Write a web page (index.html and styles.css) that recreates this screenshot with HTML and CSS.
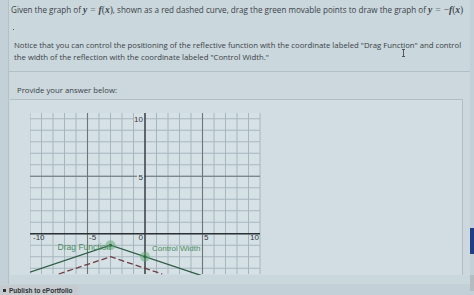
FILE: index.html
```html
<!DOCTYPE html>
<html>
<head>
<meta charset="utf-8">
<link rel="stylesheet" href="styles.css">
</head>
<body>
<div class="screen">
  <div class="main">
    <div class="card">
      <p class="q1">Given the graph of <span class="m">y</span><span class="eq">=</span><span class="m">f</span><span class="mp">(</span><span class="m">x</span><span class="mp">)</span>, shown as a red dashed curve, drag the green movable points to draw the graph of <span class="m">y</span><span class="eq">=</span><span class="mp">&minus;</span><span class="m">f</span><span class="mp">(</span><span class="m">x</span><span class="mp">)</span></p>
      <div class="dotrow"><span class="dot"></span></div>
      <p class="q2">Notice that you can control the positioning of the reflective function with the coordinate labeled "Drag Function" and control the width of the reflection with the coordinate labeled "Control Width."<span class="ibeam"></span></p>
      <div class="section">
        <p class="prompt">Provide your answer below:</p>
        <div class="answer">
          <svg class="graph" width="232" height="162" viewBox="0 0 232 162">
            <rect x="0" y="0" width="230" height="161" fill="#d6e1e6"/>
            <path class="thin" d="M0 0V161M11.5 0V161M23 0V161M34.5 0V161M46 0V161M57.5 0V161M69 0V161M80.5 0V161M92 0V161M103.5 0V161M115 0V161M126.5 0V161M138 0V161M149.5 0V161M161 0V161M172.5 0V161M184 0V161M195.5 0V161M207 0V161M218.5 0V161M230 0V161M0 5.75H230M0 17.25H230M0 28.75H230M0 40.25H230M0 51.75H230M0 63.25H230M0 74.75H230M0 86.25H230M0 97.75H230M0 109.25H230M0 120.75H230M0 132.25H230M0 143.75H230M0 155.25H230"/>
            <path class="thick" d="M57.5 0V161M172.5 0V161M0 63.25H230"/>
            <path class="axis" d="M115 0V161M0 120.75H230"/>
            <rect x="104" y="1" width="10" height="9" fill="#d6e1e6"/>
            <text class="lbl" x="113" y="9" text-anchor="end">10</text>
            <rect x="107" y="59" width="7" height="9" fill="#d6e1e6"/>
            <text class="lbl" x="113" y="66.5" text-anchor="end">5</text>
            <text class="lbl" x="3" y="127">-10</text>
            <text class="lbl" x="59" y="127">-5</text>
            <text class="lbl" x="113" y="127" text-anchor="end">0</text>
            <text class="lbl" x="174" y="127">5</text>
            <text class="lbl" x="229" y="127" text-anchor="end">10</text>
            <path class="dashed" d="M28.75 161L80.5 143.75L132.25 161"/>
            <path class="solid" d="M0 159.1L80.5 132.25L172.5 162.9"/>
            <circle cx="80.5" cy="132.25" r="5" class="halo"/>
            <circle cx="80.5" cy="132.25" r="1.6" class="core"/>
            <circle cx="115" cy="143.75" r="5" class="halo"/>
            <circle cx="115" cy="143.75" r="1.6" class="core"/>
            <text class="plabel" x="81" y="136.5" text-anchor="end">Drag Function</text>
            <text class="plabel small" x="122" y="137.5">Control Width</text>
          </svg>
        </div>
      </div>
    </div>
    <div class="footer"><span class="tab"><span class="sq"></span>Publish to ePortfolio</span></div>
  </div>
  <div class="side">
    <div class="blue"></div>
    <div class="grey"></div>
  </div>
</div>
</body>
</html>
```
FILE: styles.css
```css
html, body {
  margin: 0;
  padding: 0;
}
body {
  width: 474px;
  height: 295px;
  overflow: hidden;
  background: #c3d0d7;
  font-family: "Open Sans", "Liberation Sans", sans-serif;
  color: #3a4247;
}
.screen {
  display: flex;
  width: 474px;
  height: 295px;
}
.main {
  flex: 1;
  display: flex;
  flex-direction: column;
  min-width: 0;
}
.card {
  flex: 1;
  margin-left: 8px;
  background: #cad7dd;
  border-left: 1px solid #b3c1c8;
  position: relative;
}
.q1 {
  margin: 0;
  padding: 3.5px 0 0 2px;
  font-size: 8.1px;
  line-height: 12.4px;
  white-space: nowrap;
}
.m {
  font-family: "Liberation Serif", serif;
  font-style: italic;
  font-weight: bold;
  font-size: 9.5px;
}
.mp {
  font-family: "Liberation Serif", serif;
  font-size: 9.5px;
}
.eq {
  font-family: "Liberation Serif", serif;
  font-size: 9.5px;
  color: #6a7479;
  margin: 0 3px;
}
.dotrow {
  height: 23px;
  position: relative;
}
.dot {
  position: absolute;
  left: 4px;
  top: 13px;
  width: 1px;
  height: 1px;
  background: #555;
}
.q2 {
  margin: 0;
  padding: 0 8px 0 5px;
  font-size: 7.75px;
  line-height: 12.4px;
  height: 32px;
  position: relative;
}
.ibeam {
  position: absolute;
  left: 393px;
  top: 10px;
  width: 3px;
  height: 8px;
  border-top: 1px solid #555;
  border-bottom: 1px solid #555;
  box-sizing: border-box;
  background: linear-gradient(#555, #555) center / 1px 100% no-repeat;
}
.section {
  border-top: 1px solid #b2bfc6;
  background: #ccd8de;
}
.prompt {
  margin: 0;
  padding: 12px 0 0 8px;
  font-size: 7.75px;
  line-height: 12.4px;
  height: 14.6px;
}
.answer {
  border-top: 1px solid #b0bdc4;
  border-right: 1px solid #b0bdc4;
  margin-left: 1px;
  width: 453px;
  height: 176px;
  background: #d2dde3;
  padding: 13px 0 0 20px;
  box-sizing: border-box;
}
.graph {
  display: block;
  overflow: hidden;
}
.thin {
  stroke: #a7b6be;
  stroke-width: 1;
  fill: none;
}
.thick {
  stroke: #6a767c;
  stroke-width: 1.1;
  fill: none;
}
.axis {
  stroke: #2b3135;
  stroke-width: 1.3;
  fill: none;
}
.lbl {
  font-family: "Liberation Sans", Arial, sans-serif;
  font-size: 8px;
  fill: #33393d;
}
.dashed {
  stroke: #6e3b42;
  stroke-width: 1.3;
  stroke-dasharray: 6 3;
  fill: none;
}
.solid {
  stroke: #2e5c45;
  stroke-width: 1.3;
  fill: none;
}
.halo {
  fill: #5ea872;
  fill-opacity: 0.5;
}
.core {
  fill: #2c6a43;
}
.plabel {
  font-family: "Liberation Sans", Arial, sans-serif;
  font-size: 8.5px;
  fill: #4b8a5e;
}
.plabel.small {
  font-size: 8px;
}
.footer {
  height: 11px;
  display: flex;
  align-items: flex-end;
}
.tab {
  display: flex;
  align-items: center;
  gap: 3px;
  width: 78px;
  height: 10px;
  padding-left: 3px;
  box-sizing: border-box;
  background: #c5cbcf;
  font-family: "Liberation Sans", Arial, sans-serif;
  font-size: 6.5px;
  font-weight: bold;
  color: #2c3236;
  white-space: nowrap;
  overflow: hidden;
}
.sq {
  width: 3px;
  height: 3px;
  background: #2c3236;
  flex: none;
}
.side {
  width: 4px;
  display: flex;
  flex-direction: column;
  padding-top: 228px;
  gap: 21px;
}
.blue {
  height: 26px;
  background: #1e3e86;
}
.grey {
  height: 16px;
  background: #b4bcc0;
}
```
